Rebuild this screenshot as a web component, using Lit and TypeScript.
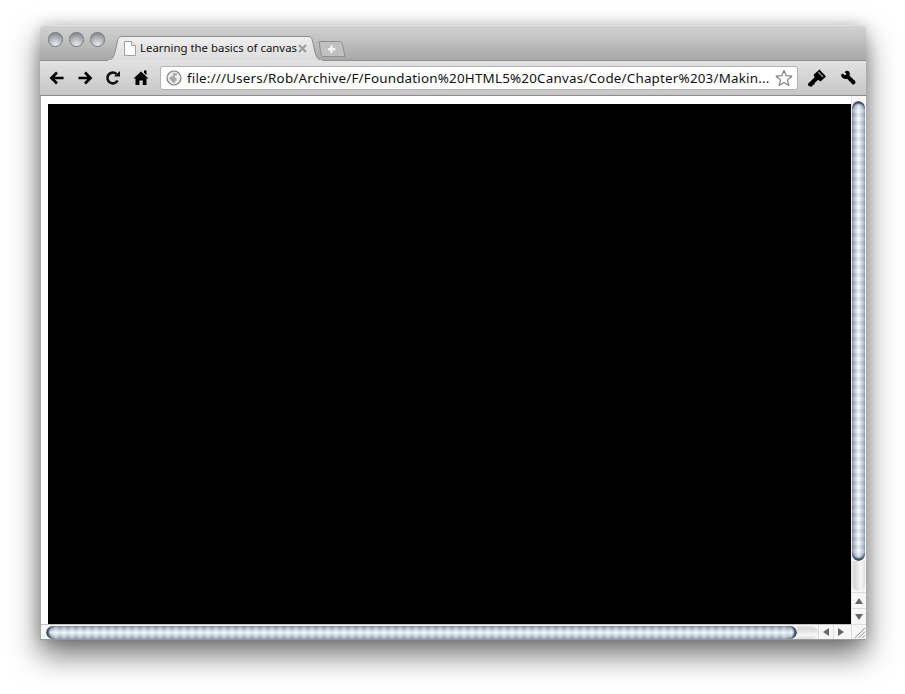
import { LitElement, html, css } from "lit";
import { customElement } from "lit/decorators.js";

@customElement("app-root")
export class AppRoot extends LitElement {
  static styles = css`
    :host { display: block; width: 905px; height: 694px; background: #fff; overflow: hidden; font-family: "Noto Sans", sans-serif; }
    .page { padding: 25px 39px 54px 40px; height: 694px; box-sizing: border-box; }
    .win { height: 615px; display: flex; flex-direction: column; border-radius: 4px 4px 0 0; box-shadow: 0 15px 30px rgba(0,0,0,.55), 0 0 14px rgba(0,0,0,.18); background: #fff; }
    .strip { height: 35px; flex: none; box-sizing: border-box; display: flex; align-items: flex-start; background: linear-gradient(#d2d2d2, #c6c6c6 30%, #a8a8a8); border-top: 1px solid #e0e0e0; border-radius: 4px 4px 0 0; position: relative; }
    .lights { display: flex; gap: 6.500px; padding: 6px 0 0 8px; width: 67px; box-sizing: border-box; flex: none; }
    .light { width: 14.500px; height: 14.500px; border-radius: 50%; box-sizing: border-box; border: 1px solid #777a80; background: radial-gradient(circle at 50% 90%, #e8eaed, #b2b6bb 50%, #7e8187 92%); }
    .tab { position: relative; width: 216px; height: 25px; margin: 10px 0 0 0; flex: none; display: flex; align-items: center; padding: 0 0 0 16px; box-sizing: border-box; }
    .tab-bg { position: absolute; inset: 0; width: 100%; height: 100%; }
    .tab > :not(.tab-bg) { position: relative; }
    .doc { width: 13px; height: 15px; margin-right: 4px; flex: none; }
    .title { font-size: 11.400px; line-height: 15px; margin-top: -2px; color: #111; white-space: nowrap; width: 158px; flex: none; }
    .x { width: 9px; height: 9px; margin-left: 0; flex: none; }
    .newtab { width: 28px; height: 16px; margin: 15px 0 0 -5px; flex: none; }
    .bar { height: 36px; flex: none; box-sizing: border-box; display: flex; align-items: center; background: linear-gradient(#e2e2e2, #c6c6c6); border-top: 1px solid #8f8f8f; border-bottom: 1px solid #8a8a8a; padding: 0 10px 0 9px; }
    .btn { width: 16px; height: 16px; flex: none; margin-right: 12px; }
    .btn.home { margin-right: 11px; }
    .omni { flex: 1; height: 24px; margin: 0 9px 0 0; background: #fff; border: 1px solid #b3b3b3; border-radius: 3px; display: flex; align-items: center; box-sizing: border-box; padding: 0 4px 0 5px; min-width: 0; }
    .globe { width: 16px; height: 16px; flex: none; margin-right: 5px; }
    .url { flex: 1; font-size: 13.400px; color: #111; white-space: nowrap; min-width: 0; letter-spacing: .2px; }
    .star { width: 18px; height: 18px; flex: none; margin-left: 4px; }
    .key { width: 20px; height: 20px; flex: none; margin: 0 13px 0 0; }
    .wrench { width: 16px; height: 16px; flex: none; }
    .body { flex: 1; min-height: 0; display: grid; grid-template-columns: 1fr 15px; grid-template-rows: 1fr 15px; background: #fff; border-left: 1px solid #a8a8a8; border-right: 1px solid #a8a8a8; border-bottom: 1px solid #9a9a9a; }
    .content { padding: 8px 0 0 7px; min-height: 0; }
    .black { height: 100%; background: #000; }
    .vs { display: flex; flex-direction: column; padding-top: 5px; background: #f6f6f6; border-left: 1px solid #e8e8e8; }
    .vthumb { height: 460px; width: 13px; flex: none; box-sizing: border-box; border-radius: 7px; background: repeating-linear-gradient(rgba(255,255,255,.18) 0 4px, rgba(110,130,160,.08) 4px 8px), linear-gradient(90deg, #7f8da3, #bcc7d6 25%, #f2f5f9 50%, #c6d0dd 75%, #93a0b4); box-shadow: inset 0 4px 2px -1px #3c4a60, inset 0 -4px 2px -1px #3c4a60; }
    .vtrack { height: 30px; flex: none; width: 13px; border-radius: 0 0 7px 7px; background: linear-gradient(90deg, #e6e6e6, #d8d8d8 20%, #f7f7f7 70%, #dcdcdc); }
    .arr { flex: 1; display: flex; flex-direction: column; justify-content: flex-end; }
    .va { height: 15px; display: flex; align-items: center; justify-content: center; border-top: 1px solid #dcdcdc; }
    .tri-u { width: 0; height: 0; border: 4px solid transparent; border-top: 0; border-bottom: 6px solid #666; }
    .tri-d { width: 0; height: 0; border: 4px solid transparent; border-bottom: 0; border-top: 6px solid #666; }
    .tri-l { width: 0; height: 0; border: 4px solid transparent; border-left: 0; border-right: 6px solid #666; }
    .tri-r { width: 0; height: 0; border: 4px solid transparent; border-right: 0; border-left: 6px solid #666; }
    .hs { display: flex; align-items: center; padding-left: 5px; background: #f6f6f6; border-top: 1px solid #c4c4c4; box-sizing: border-box; }
    .hthumb { width: 751px; height: 13px; flex: none; box-sizing: border-box; border-radius: 7px; background: repeating-linear-gradient(90deg, rgba(255,255,255,.18) 0 4px, rgba(110,130,160,.08) 4px 8px), linear-gradient(#7f8da3, #bcc7d6 25%, #f2f5f9 50%, #c6d0dd 75%, #93a0b4); box-shadow: inset 4px 0 2px -1px #3c4a60, inset -4px 0 2px -1px #3c4a60; }
    .htrack { width: 21px; height: 13px; flex: none; border-radius: 0 7px 7px 0; background: linear-gradient(#e6e6e6, #d8d8d8 20%, #f7f7f7 70%, #dcdcdc); }
    .ha { width: 15px; height: 14px; flex: none; display: flex; align-items: center; justify-content: center; border-left: 1px solid #dcdcdc; box-sizing: border-box; }
    .ha.first { margin-left: auto; margin-right: 0; }
    .ha.last { margin-right: 3px; }
    .grip { background: #f6f6f6; border-top: 1px solid #ddd; border-left: 1px solid #ddd; }
    .grip svg { width: 100%; height: 100%; display: block; }
  `;

  render() {
    return html`<div class="page"><div class="win">
      <div class="strip">
        <div class="lights"><div class="light"></div><div class="light"></div><div class="light"></div></div>
        <div class="tab">
          <svg class="tab-bg" viewBox="0 0 216 25" preserveAspectRatio="none">
            <defs><linearGradient id="tg" x1="0" y1="0" x2="0" y2="1"><stop offset="0" stop-color="#efefef"/><stop offset="1" stop-color="#dcdcdc"/></linearGradient></defs>
            <path d="M0 24.500C5 24.500 7 21 8.500 14L10.500 5C11.300 1.500 13 .5 16 .5H200C203 .5 204.700 1.500 205.500 5L207.500 14C209 21 211 24.500 216 24.500Z" fill="url(#tg)" stroke="#8d8d8d" stroke-width="1"/>
            <rect x="1" y="24" width="214" height="1" fill="#e0e0e0"/>
          </svg>
          <svg class="doc" viewBox="0 0 13 15"><path d="M1.500 .5H8.500L12.500 4.500V14.500H1.500Z" fill="#fff" stroke="#a0a0a0"/><path d="M8.500 .5V4.500H12.500" fill="#eee" stroke="#a0a0a0"/></svg>
          <span class="title">Learning the basics of canvas</span>
          <svg class="x" viewBox="0 0 9 9"><path d="M1 1L8 8M8 1L1 8" stroke="#9b9b9b" stroke-width="2"/></svg>
        </div>
        <svg class="newtab" viewBox="0 0 28 16">
          <path d="M1 .5H21C23 .5 24 1.500 24.500 3L27 15.500H5C4 15.500 3.500 14.500 3 13Z" fill="#c0c0c0" stroke="#8f8f8f"/>
          <path d="M13.500 4.500V12M9.800 8.200H17.300" stroke="#f4f4f4" stroke-width="2.400"/>
        </svg>
      </div>
      <div class="bar">
        <svg class="btn" viewBox="0 0 16 16"><path d="M14.500 8H3M8 2.500L2.500 8L8 13.500" fill="none" stroke="#000" stroke-width="2.700"/></svg>
        <svg class="btn" viewBox="0 0 16 16"><path d="M1.500 8H13M8 2.500L13.500 8L8 13.500" fill="none" stroke="#000" stroke-width="2.700"/></svg>
        <svg class="btn" viewBox="0 0 16 16"><path d="M12.600 10.500A5.400 5.400 0 1 1 11.500 4" fill="none" stroke="#111" stroke-width="2.600"/><path d="M9 6.500H15V1Z" fill="#111"/></svg>
        <svg class="btn home" viewBox="0 0 16 16"><path d="M8 1.500L15.500 8.500H13.500V15H9.800V10.500H6.400V15H2.500V8.500H.5Z M11 .5H13.500V5L11 3Z" fill="#000"/></svg>
        <div class="omni">
          <svg class="globe" viewBox="0 0 16 16"><circle cx="8" cy="8" r="7" fill="#ececec" stroke="#7c7c7c" stroke-width="1.200"/><path d="M5 2.500C7 3 8 4 7 5.500C6 7 3.500 6.500 3.500 8.500C4 10.500 6 10 6.500 12C7 13.500 8 13.500 8.500 12.500C9.500 10.500 11.500 10.500 10.500 8.500C10 7.500 8.500 8 8.500 6.500C9 5 11.500 5.500 11.500 3.500" fill="#a8a8a8"/></svg>
          <span class="url">file:///Users/Rob/Archive/F/Foundation%20HTML5%20Canvas/Code/Chapter%203/Makin...</span>
          <svg class="star" viewBox="0 0 18 18"><path d="M9 1.500L11.200 6.700L16.800 7.200L12.500 10.900L13.800 16.400L9 13.500L4.200 16.400L5.500 10.900L1.200 7.200L6.800 6.700Z" fill="#fff" stroke="#808080" stroke-width="1.200" stroke-linejoin="round"/></svg>
        </div>
        <svg class="key" viewBox="0 0 20 20"><path d="M1 15.800L7.500 9.500L6.500 6.800L12.500 1.500L19 8.500L13.500 13.500L11 11.800L7.500 15.300V16.800H5.500V18.500H2.800L1 17.300Z" fill="#000"/><path d="M11.300 4L16 9" stroke="#999" stroke-width="1.100"/></svg>
        <svg class="wrench" viewBox="0 0 18 18"><path d="M1 5.500L3 3.800L5.500 6L7.500 4.500L5 2.200L7 1C9.500.5 11 2 11 4.500C11 5.500 10.800 6 10.800 6.500L17.500 13L17 15.500L14.500 16.500L8 9.800C5 10.500 2 9.500 1 5.500Z" fill="#000"/></svg>
      </div>
      <div class="body">
        <div class="content"><div class="black"></div></div>
        <div class="vs">
          <div class="vthumb"></div><div class="vtrack"></div>
          <div class="arr">
            <div class="va"><div class="tri-u"></div></div>
            <div class="va"><div class="tri-d"></div></div>
          </div>
        </div>
        <div class="hs">
          <div class="hthumb"></div><div class="htrack"></div>
          <div class="ha first"><div class="tri-l"></div></div>
          <div class="ha last"><div class="tri-r"></div></div>
        </div>
        <div class="grip"><svg viewBox="0 0 15 15"><path d="M3 14L14 3M7 14L14 7M11 14L14 11" stroke="#888" stroke-width="1"/></svg></div>
      </div>
    </div></div>`;
  }
}
